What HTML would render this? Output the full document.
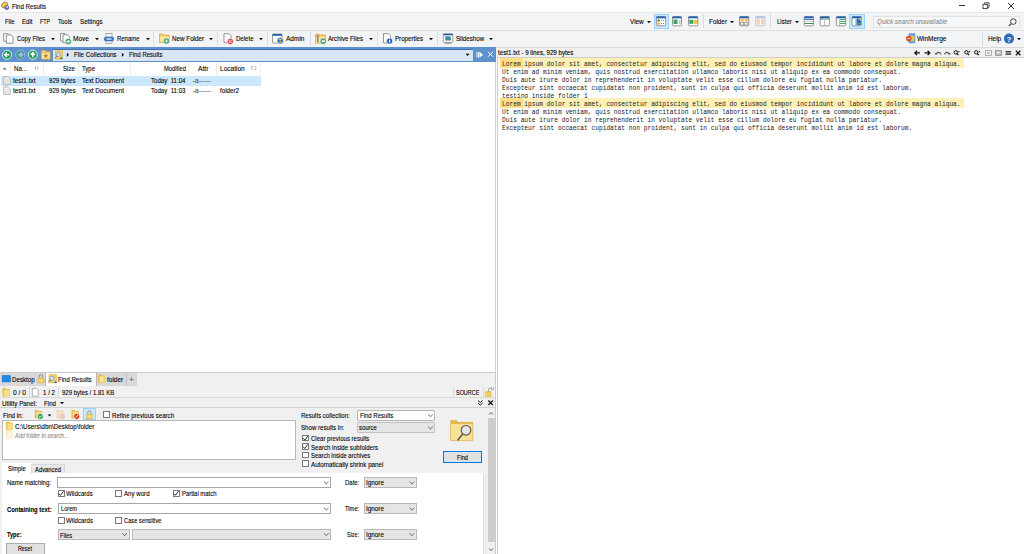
<!DOCTYPE html>
<html><head><meta charset="utf-8"><style>
html,body{margin:0;padding:0;width:1024px;height:554px;overflow:hidden;background:#fff;}
body>*{position:absolute;}
span{white-space:pre;transform-origin:0 0;-webkit-text-stroke:0.1px currentColor;}
svg{overflow:visible;}
</style></head><body>
<div style="left:0px;top:0px;width:1024px;height:12px;background:#fff"></div>
<div style="left:0px;top:12px;width:1024px;height:1px;background:#e6e6e6"></div>
<svg style="left:0px;top:0px" width="12" height="12" viewBox="0 0 12 12"><ellipse cx="4.6" cy="5" rx="3.4" ry="2.6" transform="rotate(-40 4.6 5)" fill="#f4cf3a" stroke="#6a5aa0" stroke-width="0.6"/><circle cx="6.8" cy="7.6" r="2.1" fill="#5a68b8" stroke="#3a3a8a" stroke-width="0.4"/><circle cx="7.1" cy="7.1" r="0.9" fill="#fff"/></svg>
<span style="left:12px;top:3.4px;font-family:'Liberation Sans', sans-serif;font-size:7.3px;line-height:7.3px;color:#000;transform:scaleX(0.838);">Find Results</span>
<div style="left:959px;top:5px;width:6px;height:1px;background:#333"></div>
<svg style="left:982px;top:2px" width="8" height="7" viewBox="0 0 8 7"><rect x="1" y="2.3" width="4.3" height="4.3" fill="none" stroke="#333" stroke-width="0.9"/><path d="M2.5 1.8 V0.8 H7 V5.3 H5.8" fill="none" stroke="#333" stroke-width="0.9"/></svg>
<svg style="left:1007px;top:2px" width="8" height="8" viewBox="0 0 8 8"><path d="M1 1 L7 7 M7 1 L1 7" stroke="#333" stroke-width="1"/></svg>
<div style="left:0px;top:13px;width:1024px;height:17px;background:#f3f4f6"></div>
<div style="left:0px;top:30px;width:1024px;height:1px;background:#e0e0e0"></div>
<span style="left:5px;top:18.0px;font-family:'Liberation Sans', sans-serif;font-size:7.3px;line-height:7.3px;color:#000;transform:scaleX(0.807);">File</span>
<span style="left:22px;top:18.0px;font-family:'Liberation Sans', sans-serif;font-size:7.3px;line-height:7.3px;color:#000;transform:scaleX(0.835);">Edit</span>
<span style="left:40px;top:18.0px;font-family:'Liberation Sans', sans-serif;font-size:7.3px;line-height:7.3px;color:#000;transform:scaleX(0.725);">FTP</span>
<span style="left:58px;top:18.0px;font-family:'Liberation Sans', sans-serif;font-size:7.3px;line-height:7.3px;color:#000;transform:scaleX(0.821);">Tools</span>
<span style="left:80px;top:18.0px;font-family:'Liberation Sans', sans-serif;font-size:7.3px;line-height:7.3px;color:#000;transform:scaleX(0.853);">Settings</span>
<span style="left:630.25px;top:17.9px;font-family:'Liberation Sans', sans-serif;font-size:7.3px;line-height:7.3px;color:#000;transform:scaleX(0.876);">View</span>
<svg style="left:647px;top:20.9px" width="4" height="2.2" viewBox="0 0 4 2.2"><path d="M0 0 H4 L2 2.2 Z" fill="#111"/></svg>
<div style="left:653.5px;top:13.5px;width:15.5px;height:15px;background:#cce8ff;border:1px solid #99d1ff;box-sizing:border-box"></div>
<div style="left:703px;top:14px;width:1px;height:14px;background:#dcdcdc"></div>
<span style="left:709px;top:17.9px;font-family:'Liberation Sans', sans-serif;font-size:7.3px;line-height:7.3px;color:#000;transform:scaleX(0.870);">Folder</span>
<svg style="left:729.5px;top:20.9px" width="4" height="2.2" viewBox="0 0 4 2.2"><path d="M0 0 H4 L2 2.2 Z" fill="#111"/></svg>
<div style="left:770px;top:14px;width:1px;height:14px;background:#dcdcdc"></div>
<span style="left:776.75px;top:17.9px;font-family:'Liberation Sans', sans-serif;font-size:7.3px;line-height:7.3px;color:#000;transform:scaleX(0.827);">Lister</span>
<svg style="left:794.5px;top:20.9px" width="4" height="2.2" viewBox="0 0 4 2.2"><path d="M0 0 H4 L2 2.2 Z" fill="#111"/></svg>
<div style="left:849px;top:13.5px;width:15.5px;height:15px;background:#cce8ff;border:1px solid #99d1ff;box-sizing:border-box"></div>
<div style="left:872.5px;top:15.5px;width:147px;height:12px;background:#f6f7f9;border:1px solid #e3e3e3;box-sizing:border-box"></div>
<span style="left:876.5px;top:17.8px;font-family:'Liberation Sans', sans-serif;font-size:7.3px;line-height:7.3px;color:#8a8a8a;font-style:italic;transform:scaleX(0.862);">Quick search unavailable</span>
<svg style="left:1008px;top:17.5px" width="9" height="9" viewBox="0 0 9 9"><circle cx="5.3" cy="3.6" r="2.8" fill="none" stroke="#444" stroke-width="1"/><path d="M3.3 5.6 L0.8 8.2" stroke="#444" stroke-width="1.2"/></svg>
<div style="left:0px;top:31px;width:1024px;height:16px;background:#f3f4f6"></div>
<span style="left:17px;top:35.4px;font-family:'Liberation Sans', sans-serif;font-size:7.3px;line-height:7.3px;color:#000;transform:scaleX(0.812);">Copy Files</span>
<span style="left:73px;top:35.4px;font-family:'Liberation Sans', sans-serif;font-size:7.3px;line-height:7.3px;color:#000;transform:scaleX(0.897);">Move</span>
<span style="left:117px;top:35.4px;font-family:'Liberation Sans', sans-serif;font-size:7.3px;line-height:7.3px;color:#000;transform:scaleX(0.815);">Rename</span>
<span style="left:171.8px;top:35.4px;font-family:'Liberation Sans', sans-serif;font-size:7.3px;line-height:7.3px;color:#000;transform:scaleX(0.860);">New Folder</span>
<span style="left:235.9px;top:35.4px;font-family:'Liberation Sans', sans-serif;font-size:7.3px;line-height:7.3px;color:#000;transform:scaleX(0.830);">Delete</span>
<span style="left:285.5px;top:35.4px;font-family:'Liberation Sans', sans-serif;font-size:7.3px;line-height:7.3px;color:#000;transform:scaleX(0.894);">Admin</span>
<span style="left:328px;top:35.4px;font-family:'Liberation Sans', sans-serif;font-size:7.3px;line-height:7.3px;color:#000;transform:scaleX(0.838);">Archive Files</span>
<span style="left:395px;top:35.4px;font-family:'Liberation Sans', sans-serif;font-size:7.3px;line-height:7.3px;color:#000;transform:scaleX(0.842);">Properties</span>
<span style="left:455.6px;top:35.4px;font-family:'Liberation Sans', sans-serif;font-size:7.3px;line-height:7.3px;color:#000;transform:scaleX(0.846);">Slideshow</span>
<span style="left:916.6px;top:35.4px;font-family:'Liberation Sans', sans-serif;font-size:7.3px;line-height:7.3px;color:#000;transform:scaleX(0.884);">WinMerge</span>
<span style="left:987.9px;top:35.4px;font-family:'Liberation Sans', sans-serif;font-size:7.3px;line-height:7.3px;color:#000;transform:scaleX(0.872);">Help</span>
<svg style="left:51px;top:37.9px" width="4" height="2.2" viewBox="0 0 4 2.2"><path d="M0 0 H4 L2 2.2 Z" fill="#111"/></svg>
<svg style="left:95px;top:37.9px" width="4" height="2.2" viewBox="0 0 4 2.2"><path d="M0 0 H4 L2 2.2 Z" fill="#111"/></svg>
<svg style="left:145.6px;top:37.9px" width="4" height="2.2" viewBox="0 0 4 2.2"><path d="M0 0 H4 L2 2.2 Z" fill="#111"/></svg>
<svg style="left:209.4px;top:37.9px" width="4" height="2.2" viewBox="0 0 4 2.2"><path d="M0 0 H4 L2 2.2 Z" fill="#111"/></svg>
<svg style="left:258.9px;top:37.9px" width="4" height="2.2" viewBox="0 0 4 2.2"><path d="M0 0 H4 L2 2.2 Z" fill="#111"/></svg>
<svg style="left:369px;top:37.9px" width="4" height="2.2" viewBox="0 0 4 2.2"><path d="M0 0 H4 L2 2.2 Z" fill="#111"/></svg>
<svg style="left:429.25px;top:37.9px" width="4" height="2.2" viewBox="0 0 4 2.2"><path d="M0 0 H4 L2 2.2 Z" fill="#111"/></svg>
<svg style="left:489.25px;top:37.9px" width="4" height="2.2" viewBox="0 0 4 2.2"><path d="M0 0 H4 L2 2.2 Z" fill="#111"/></svg>
<svg style="left:1016.5px;top:37.9px" width="4" height="2.2" viewBox="0 0 4 2.2"><path d="M0 0 H4 L2 2.2 Z" fill="#111"/></svg>
<div style="left:152.8px;top:31.5px;width:1px;height:14px;background:#dcdcdc"></div>
<div style="left:217.1px;top:31.5px;width:1px;height:14px;background:#dcdcdc"></div>
<div style="left:267.25px;top:31.5px;width:1px;height:14px;background:#dcdcdc"></div>
<div style="left:309.75px;top:31.5px;width:1px;height:14px;background:#dcdcdc"></div>
<div style="left:377.1px;top:31.5px;width:1px;height:14px;background:#dcdcdc"></div>
<div style="left:437.0px;top:31.5px;width:1px;height:14px;background:#dcdcdc"></div>
<div style="left:981.75px;top:31.5px;width:1px;height:14px;background:#dcdcdc"></div>
<div style="left:0px;top:47px;width:495.5px;height:14.5px;background:#5f91cf"></div>
<div style="left:52.5px;top:48.5px;width:420px;height:12.5px;background:#d9e5f3;border-top:1px solid #3f6fae;box-sizing:border-box"></div>
<span style="left:74.1px;top:51.1px;font-family:'Liberation Sans', sans-serif;font-size:7.3px;line-height:7.3px;color:#000;transform:scaleX(0.859);">File Collections</span>
<span style="left:128.5px;top:51.1px;font-family:'Liberation Sans', sans-serif;font-size:7.3px;line-height:7.3px;color:#000;transform:scaleX(0.826);">Find Results</span>
<div style="left:496px;top:47px;width:528px;height:10.5px;background:#f0f0f0"></div>
<div style="left:496px;top:46.5px;width:528px;height:1px;background:#d9d9d9"></div>
<div style="left:495px;top:61.5px;width:1px;height:492.5px;background:#cfcfcf"></div>
<span style="left:497.9px;top:50.12px;font-family:'Liberation Sans', sans-serif;font-size:6.8px;line-height:6.8px;color:#000;transform:scaleX(0.910);">test1.txt - 9 lines, 929 bytes</span>
<div style="left:497px;top:57px;width:527px;height:497px;background:#fff;border-left:1px solid #cdcdcd;border-top:1px solid #cdcdcd;box-sizing:border-box"></div>
<div style="left:500px;top:58.2px;width:463.5px;height:9.5px;background:#fff1b5;border-radius:1px"></div>
<div style="left:500px;top:58.2px;width:23px;height:9.5px;background:#ffe089;border-radius:1px"></div>
<span style="left:501.5px;top:60.81px;font-family:'Liberation Mono', monospace;font-size:6.7px;line-height:6.7px;color:#1a1a1a;-webkit-text-stroke:0;transform:scaleX(0.929);">Lorem ipsum dolor sit amet, consectetur adipiscing elit, sed do eiusmod tempor incididunt ut labore et dolore magna aliqua.</span>
<span style="left:501.5px;top:68.81px;font-family:'Liberation Mono', monospace;font-size:6.7px;line-height:6.7px;color:#1a1a1a;-webkit-text-stroke:0;transform:scaleX(0.929);">Ut enim ad minim veniam, quis nostrud exercitation ullamco laboris nisi ut aliquip ex ea commodo consequat.</span>
<span style="left:501.5px;top:76.81px;font-family:'Liberation Mono', monospace;font-size:6.7px;line-height:6.7px;color:#1a1a1a;-webkit-text-stroke:0;transform:scaleX(0.929);">Duis aute irure dolor in reprehenderit in voluptate velit esse cillum dolore eu fugiat nulla pariatur.</span>
<span style="left:501.5px;top:84.81px;font-family:'Liberation Mono', monospace;font-size:6.7px;line-height:6.7px;color:#1a1a1a;-webkit-text-stroke:0;transform:scaleX(0.929);">Excepteur sint occaecat cupidatat non proident, sunt in culpa qui officia deserunt mollit anim id est laborum.</span>
<span style="left:501.5px;top:92.81px;font-family:'Liberation Mono', monospace;font-size:6.7px;line-height:6.7px;color:#1a1a1a;-webkit-text-stroke:0;transform:scaleX(0.929);">testing inside folder 1</span>
<div style="left:500px;top:98.2px;width:463.5px;height:9.5px;background:#fff1b5;border-radius:1px"></div>
<div style="left:500px;top:98.2px;width:23px;height:9.5px;background:#ffe089;border-radius:1px"></div>
<span style="left:501.5px;top:100.81px;font-family:'Liberation Mono', monospace;font-size:6.7px;line-height:6.7px;color:#1a1a1a;-webkit-text-stroke:0;transform:scaleX(0.929);">Lorem ipsum dolor sit amet, consectetur adipiscing elit, sed do eiusmod tempor incididunt ut labore et dolore magna aliqua.</span>
<span style="left:501.5px;top:108.81px;font-family:'Liberation Mono', monospace;font-size:6.7px;line-height:6.7px;color:#1a1a1a;-webkit-text-stroke:0;transform:scaleX(0.929);">Ut enim ad minim veniam, quis nostrud exercitation ullamco laboris nisi ut aliquip ex ea commodo consequat.</span>
<span style="left:501.5px;top:116.81px;font-family:'Liberation Mono', monospace;font-size:6.7px;line-height:6.7px;color:#1a1a1a;-webkit-text-stroke:0;transform:scaleX(0.929);">Duis aute irure dolor in reprehenderit in voluptate velit esse cillum dolore eu fugiat nulla pariatur.</span>
<span style="left:501.5px;top:124.81px;font-family:'Liberation Mono', monospace;font-size:6.7px;line-height:6.7px;color:#1a1a1a;-webkit-text-stroke:0;transform:scaleX(0.929);">Excepteur sint occaecat cupidatat non proident, sunt in culpa qui officia deserunt mollit anim id est laborum.</span>
<div style="left:10.0px;top:62px;width:1px;height:13px;background:#ececec"></div>
<div style="left:43.0px;top:62px;width:1px;height:13px;background:#ececec"></div>
<div style="left:78.0px;top:62px;width:1px;height:13px;background:#ececec"></div>
<div style="left:130.0px;top:62px;width:1px;height:13px;background:#ececec"></div>
<div style="left:188.3px;top:62px;width:1px;height:13px;background:#ececec"></div>
<div style="left:215.8px;top:62px;width:1px;height:13px;background:#ececec"></div>
<div style="left:259.7px;top:62px;width:1px;height:13px;background:#ececec"></div>
<span style="left:14px;top:65.39px;font-family:'Liberation Sans', sans-serif;font-size:7.3px;line-height:7.3px;color:#000;transform:scaleX(0.843);">Na...</span>
<span style="left:63px;top:65.39px;font-family:'Liberation Sans', sans-serif;font-size:7.3px;line-height:7.3px;color:#000;transform:scaleX(0.845);">Size</span>
<span style="left:82px;top:65.39px;font-family:'Liberation Sans', sans-serif;font-size:7.3px;line-height:7.3px;color:#000;transform:scaleX(0.821);">Type</span>
<span style="left:163.7px;top:65.39px;font-family:'Liberation Sans', sans-serif;font-size:7.3px;line-height:7.3px;color:#000;transform:scaleX(0.797);">Modified</span>
<span style="left:197.9px;top:65.39px;font-family:'Liberation Sans', sans-serif;font-size:7.3px;line-height:7.3px;color:#000;transform:scaleX(0.924);">Attr</span>
<span style="left:220px;top:65.39px;font-family:'Liberation Sans', sans-serif;font-size:7.3px;line-height:7.3px;color:#000;transform:scaleX(0.895);">Location</span>
<div style="left:0.5px;top:75.5px;width:260.5px;height:10px;background:#cce8ff"></div>
<span style="left:12.5px;top:77.39px;font-family:'Liberation Sans', sans-serif;font-size:7.3px;line-height:7.3px;color:#000;transform:scaleX(0.880);">test1.txt</span>
<span style="left:48.5px;top:77.39px;font-family:'Liberation Sans', sans-serif;font-size:7.3px;line-height:7.3px;color:#000;transform:scaleX(0.837);">929 bytes</span>
<span style="left:81.5px;top:77.39px;font-family:'Liberation Sans', sans-serif;font-size:7.3px;line-height:7.3px;color:#000;transform:scaleX(0.863);">Text Document</span>
<span style="left:151.2px;top:77.39px;font-family:'Liberation Sans', sans-serif;font-size:7.3px;line-height:7.3px;color:#000;transform:scaleX(0.836);">Today  11:04</span>
<span style="left:192.4px;top:77.39px;font-family:'Liberation Sans', sans-serif;font-size:7.3px;line-height:7.3px;color:#555;">-a-----</span>
<span style="left:12.5px;top:87.39px;font-family:'Liberation Sans', sans-serif;font-size:7.3px;line-height:7.3px;color:#000;transform:scaleX(0.880);">test1.txt</span>
<span style="left:48.5px;top:87.39px;font-family:'Liberation Sans', sans-serif;font-size:7.3px;line-height:7.3px;color:#000;transform:scaleX(0.837);">929 bytes</span>
<span style="left:81.5px;top:87.39px;font-family:'Liberation Sans', sans-serif;font-size:7.3px;line-height:7.3px;color:#000;transform:scaleX(0.863);">Text Document</span>
<span style="left:151.2px;top:87.39px;font-family:'Liberation Sans', sans-serif;font-size:7.3px;line-height:7.3px;color:#000;transform:scaleX(0.836);">Today  11:03</span>
<span style="left:192.4px;top:87.39px;font-family:'Liberation Sans', sans-serif;font-size:7.3px;line-height:7.3px;color:#555;">-a-----</span>
<span style="left:220px;top:87.39px;font-family:'Liberation Sans', sans-serif;font-size:7.3px;line-height:7.3px;color:#000;transform:scaleX(0.852);">folder2</span>
<div style="left:0px;top:372px;width:496px;height:14px;background:#f0f0f0;border-top:1px solid #cbcbcb;box-sizing:border-box"></div>
<div style="left:0px;top:373px;width:45.5px;height:13px;background:#d9d9d9"></div>
<div style="left:45.5px;top:373px;width:50.5px;height:13px;background:#fff"></div>
<div style="left:96px;top:373px;width:1px;height:13px;background:#b8b8b8"></div>
<div style="left:44.6px;top:373px;width:1px;height:13px;background:#b8b8b8"></div>
<div style="left:126px;top:373px;width:1px;height:13px;background:#c4c4c4"></div>
<div style="left:97px;top:373px;width:29px;height:13px;background:#d9d9d9"></div>
<div style="left:127px;top:373px;width:9.5px;height:13px;background:#d9d9d9"></div>
<span style="left:11.7px;top:375.8px;font-family:'Liberation Sans', sans-serif;font-size:7.3px;line-height:7.3px;color:#000;transform:scaleX(0.848);">Desktop</span>
<span style="left:58px;top:375.8px;font-family:'Liberation Sans', sans-serif;font-size:7.3px;line-height:7.3px;color:#000;transform:scaleX(0.828);">Find Results</span>
<span style="left:106.7px;top:375.8px;font-family:'Liberation Sans', sans-serif;font-size:7.3px;line-height:7.3px;color:#000;transform:scaleX(0.892);">folder</span>
<span style="left:128.5px;top:376.4px;font-family:'Liberation Sans', sans-serif;font-size:7.3px;line-height:7.3px;color:#666;transform:scaleX(1.172);">+</span>
<div style="left:0px;top:386px;width:496px;height:11.5px;background:#f0f0f0;border-bottom:1px solid #d9d9d9;box-sizing:border-box"></div>
<span style="left:13px;top:389.4px;font-family:'Liberation Sans', sans-serif;font-size:7.3px;line-height:7.3px;color:#000;transform:scaleX(0.915);">0 / 0</span>
<span style="left:43px;top:389.4px;font-family:'Liberation Sans', sans-serif;font-size:7.3px;line-height:7.3px;color:#000;transform:scaleX(0.845);">1 / 2</span>
<span style="left:62px;top:389.4px;font-family:'Liberation Sans', sans-serif;font-size:7.3px;line-height:7.3px;color:#000;transform:scaleX(0.820);">929 bytes / 1.81 KB</span>
<span style="left:456.3px;top:389.4px;font-family:'Liberation Sans', sans-serif;font-size:7.3px;line-height:7.3px;color:#000;transform:scaleX(0.746);">SOURCE</span>
<div style="left:28.5px;top:386.5px;width:1px;height:10px;background:#dcdcdc"></div>
<div style="left:58px;top:386.5px;width:1px;height:10px;background:#dcdcdc"></div>
<div style="left:452.8px;top:386.5px;width:1px;height:10px;background:#dcdcdc"></div>
<div style="left:483.4px;top:386.5px;width:1px;height:10px;background:#dcdcdc"></div>
<div style="left:0px;top:397.5px;width:496px;height:10.5px;background:#f0f0f0;border-bottom:1px solid #d0d0d0;box-sizing:border-box"></div>
<span style="left:2px;top:399.9px;font-family:'Liberation Sans', sans-serif;font-size:7.3px;line-height:7.3px;color:#000;transform:scaleX(0.863);">Utility Panel:</span>
<span style="left:44px;top:399.9px;font-family:'Liberation Sans', sans-serif;font-size:7.3px;line-height:7.3px;color:#000;transform:scaleX(0.845);">Find</span>
<svg style="left:60px;top:401.9px" width="4" height="2.2" viewBox="0 0 4 2.2"><path d="M0 0 H4 L2 2.2 Z" fill="#111"/></svg>
<div style="left:0px;top:408px;width:487px;height:146px;background:#f0f0f0"></div>
<span style="left:2.8px;top:412.0px;font-family:'Liberation Sans', sans-serif;font-size:7.3px;line-height:7.3px;color:#000;transform:scaleX(0.844);">Find in:</span>
<div style="left:83px;top:408.2px;width:13px;height:12.2px;background:#cce8ff;border:1px solid #99d1ff;box-sizing:border-box"></div>
<div style="left:103.2px;top:411.1px;width:7.2px;height:7.3px;background:#fff;border:1px solid #7a7a7a;box-sizing:border-box"></div>
<span style="left:112px;top:412.0px;font-family:'Liberation Sans', sans-serif;font-size:7.3px;line-height:7.3px;color:#000;transform:scaleX(0.831);">Refine previous search</span>
<div style="left:1.5px;top:420.2px;width:294px;height:40.3px;background:#fff;border:1px solid #b9b9b9;box-sizing:border-box"></div>
<span style="left:14.5px;top:423.2px;font-family:'Liberation Sans', sans-serif;font-size:7.3px;line-height:7.3px;color:#000;transform:scaleX(0.867);">C:\Users\dbn\Desktop\folder</span>
<span style="left:14.5px;top:431.7px;font-family:'Liberation Sans', sans-serif;font-size:7.3px;line-height:7.3px;color:#8a8a8a;font-style:italic;transform:scaleX(0.749);">Add folder to search...</span>
<span style="left:301px;top:412.0px;font-family:'Liberation Sans', sans-serif;font-size:7.3px;line-height:7.3px;color:#000;transform:scaleX(0.828);">Results collection:</span>
<span style="left:301px;top:423.7px;font-family:'Liberation Sans', sans-serif;font-size:7.3px;line-height:7.3px;color:#000;transform:scaleX(0.841);">Show results in:</span>
<div style="left:356.7px;top:410.1px;width:78.4px;height:10.8px;background:#fff;border:1px solid #b5b5b5;border-radius:1px;box-sizing:border-box"></div>
<span style="left:359.6px;top:412.0px;font-family:'Liberation Sans', sans-serif;font-size:7.3px;line-height:7.3px;color:#000;transform:scaleX(0.823);">Find Results</span>
<div style="left:357px;top:422.3px;width:78px;height:10.7px;background:#e5e5e5;border:1px solid #c2c2c2;border-radius:1px;box-sizing:border-box"></div>
<span style="left:359.2px;top:423.7px;font-family:'Liberation Sans', sans-serif;font-size:7.3px;line-height:7.3px;color:#000;transform:scaleX(0.813);">source</span>
<div style="left:301.9px;top:434.9px;width:7px;height:6.6px;background:#fff;border:1px solid #7a7a7a;box-sizing:border-box"></div>
<span style="left:310.5px;top:435.3px;font-family:'Liberation Sans', sans-serif;font-size:7.3px;line-height:7.3px;color:#000;transform:scaleX(0.827);">Clear previous results</span>
<div style="left:301.9px;top:443.34999999999997px;width:7px;height:6.6px;background:#fff;border:1px solid #7a7a7a;box-sizing:border-box"></div>
<span style="left:310.5px;top:443.75px;font-family:'Liberation Sans', sans-serif;font-size:7.3px;line-height:7.3px;color:#000;transform:scaleX(0.840);">Search inside subfolders</span>
<div style="left:301.9px;top:451.79999999999995px;width:7px;height:6.6px;background:#fff;border:1px solid #7a7a7a;box-sizing:border-box"></div>
<span style="left:310.5px;top:452.19px;font-family:'Liberation Sans', sans-serif;font-size:7.3px;line-height:7.3px;color:#000;transform:scaleX(0.808);">Search inside archives</span>
<div style="left:301.9px;top:460.25px;width:7px;height:6.6px;background:#fff;border:1px solid #7a7a7a;box-sizing:border-box"></div>
<span style="left:310.5px;top:460.65px;font-family:'Liberation Sans', sans-serif;font-size:7.3px;line-height:7.3px;color:#000;transform:scaleX(0.854);">Automatically shrink panel</span>
<div style="left:443.1px;top:451px;width:39px;height:11.8px;background:#e1e1e1;border:1px solid #0078d7;box-shadow:inset 0 0 0 1px #cfe6fa;box-sizing:border-box"></div>
<span style="left:456.8px;top:453.9px;font-family:'Liberation Sans', sans-serif;font-size:7.3px;line-height:7.3px;color:#000;transform:scaleX(0.774);">Find</span>
<div style="left:487px;top:408px;width:8.2px;height:146px;background:#f0f0f0"></div>
<div style="left:488px;top:418px;width:7px;height:124px;background:#cdcdcd"></div>
<div style="left:495px;top:372px;width:1px;height:182px;background:#cacaca"></div>
<div style="left:483px;top:473.3px;width:1px;height:81px;background:#dedede"></div>
<div style="left:1.5px;top:463px;width:29.5px;height:11px;background:#fff"></div>
<div style="left:31px;top:464px;width:34.4px;height:9.5px;background:#e8e8e8;border:1px solid #d9d9d9;border-bottom:none;box-sizing:border-box"></div>
<span style="left:8px;top:464.7px;font-family:'Liberation Sans', sans-serif;font-size:7.3px;line-height:7.3px;color:#000;transform:scaleX(0.798);">Simple</span>
<span style="left:35px;top:465.7px;font-family:'Liberation Sans', sans-serif;font-size:7.3px;line-height:7.3px;color:#000;transform:scaleX(0.801);">Advanced</span>
<div style="left:1.5px;top:473.3px;width:481.6px;height:81px;background:#fff"></div>
<span style="left:6.5px;top:479.0px;font-family:'Liberation Sans', sans-serif;font-size:7.3px;line-height:7.3px;color:#000;transform:scaleX(0.828);">Name matching:</span>
<div style="left:57.3px;top:477.3px;width:273.6px;height:10.8px;background:#fff;border:1px solid #a8a8a8;box-sizing:border-box"></div>
<div style="left:57.5px;top:490.2px;width:7px;height:7px;background:#fff;border:1px solid #7a7a7a;box-sizing:border-box"></div>
<span style="left:66.3px;top:490.4px;font-family:'Liberation Sans', sans-serif;font-size:7.3px;line-height:7.3px;color:#000;transform:scaleX(0.834);">Wildcards</span>
<div style="left:115px;top:490.1px;width:7.2px;height:7.2px;background:#fff;border:1px solid #7a7a7a;box-sizing:border-box"></div>
<span style="left:124.1px;top:490.4px;font-family:'Liberation Sans', sans-serif;font-size:7.3px;line-height:7.3px;color:#000;transform:scaleX(0.841);">Any word</span>
<div style="left:172.5px;top:490.1px;width:7.2px;height:7.2px;background:#fff;border:1px solid #7a7a7a;box-sizing:border-box"></div>
<span style="left:181.6px;top:490.4px;font-family:'Liberation Sans', sans-serif;font-size:7.3px;line-height:7.3px;color:#000;transform:scaleX(0.808);">Partial match</span>
<span style="left:6.5px;top:505.6px;font-family:'Liberation Sans', sans-serif;font-size:7.3px;line-height:7.3px;color:#000;font-weight:bold;transform:scaleX(0.805);">Containing text:</span>
<div style="left:57.5px;top:503.4px;width:273.4px;height:11px;background:#fff;border:1px solid #a8a8a8;box-sizing:border-box"></div>
<span style="left:61px;top:504.9px;font-family:'Liberation Sans', sans-serif;font-size:7.3px;line-height:7.3px;color:#000;transform:scaleX(0.773);">Lorem</span>
<div style="left:57.5px;top:516.6px;width:7px;height:7px;background:#fff;border:1px solid #7a7a7a;box-sizing:border-box"></div>
<span style="left:66px;top:517.0px;font-family:'Liberation Sans', sans-serif;font-size:7.3px;line-height:7.3px;color:#000;transform:scaleX(0.843);">Wildcards</span>
<div style="left:115px;top:516.6px;width:7px;height:7px;background:#fff;border:1px solid #7a7a7a;box-sizing:border-box"></div>
<span style="left:123.8px;top:517.0px;font-family:'Liberation Sans', sans-serif;font-size:7.3px;line-height:7.3px;color:#000;transform:scaleX(0.790);">Case sensitive</span>
<span style="left:6.5px;top:531.39px;font-family:'Liberation Sans', sans-serif;font-size:7.3px;line-height:7.3px;color:#000;font-weight:bold;transform:scaleX(0.766);">Type:</span>
<div style="left:57.5px;top:529px;width:72.1px;height:10.8px;background:#e5e5e5;border:1px solid #b8b8b8;box-sizing:border-box"></div>
<span style="left:60px;top:531.69px;font-family:'Liberation Sans', sans-serif;font-size:7.3px;line-height:7.3px;color:#000;transform:scaleX(0.779);">Files</span>
<div style="left:131.9px;top:529px;width:199px;height:10.8px;background:#e5e5e5;border:1px solid #b8b8b8;box-sizing:border-box"></div>
<div style="left:6px;top:542.9px;width:39px;height:12px;background:#e1e1e1;border:1px solid #adadad;box-sizing:border-box"></div>
<span style="left:18.2px;top:545.39px;font-family:'Liberation Sans', sans-serif;font-size:7.3px;line-height:7.3px;color:#000;transform:scaleX(0.734);">Reset</span>
<span style="left:344.7px;top:479.2px;font-family:'Liberation Sans', sans-serif;font-size:7.3px;line-height:7.3px;color:#000;transform:scaleX(0.819);">Date:</span>
<div style="left:363.9px;top:477.2px;width:52.8px;height:10.8px;background:#e5e5e5;border:1px solid #b8b8b8;box-sizing:border-box"></div>
<span style="left:365.8px;top:479.1px;font-family:'Liberation Sans', sans-serif;font-size:7.3px;line-height:7.3px;color:#000;transform:scaleX(0.869);">Ignore</span>
<span style="left:344.7px;top:505.3px;font-family:'Liberation Sans', sans-serif;font-size:7.3px;line-height:7.3px;color:#000;transform:scaleX(0.795);">Time:</span>
<div style="left:363.9px;top:503.3px;width:52.8px;height:10.8px;background:#e5e5e5;border:1px solid #b8b8b8;box-sizing:border-box"></div>
<span style="left:365.8px;top:505.2px;font-family:'Liberation Sans', sans-serif;font-size:7.3px;line-height:7.3px;color:#000;transform:scaleX(0.869);">Ignore</span>
<span style="left:346.9px;top:531.0px;font-family:'Liberation Sans', sans-serif;font-size:7.3px;line-height:7.3px;color:#000;transform:scaleX(0.745);">Size:</span>
<div style="left:363.9px;top:529px;width:52.8px;height:10.8px;background:#e5e5e5;border:1px solid #b8b8b8;box-sizing:border-box"></div>
<span style="left:365.8px;top:530.89px;font-family:'Liberation Sans', sans-serif;font-size:7.3px;line-height:7.3px;color:#000;transform:scaleX(0.869);">Ignore</span>
<svg style="left:0px;top:0px" width="1024" height="554" viewBox="0 0 1024 554"><path d="M3.7 33.7 H8.2 L10.2 35.7 V41.2 H3.7 Z" fill="#fff" stroke="#7a7a7a" stroke-width="0.8" stroke-linejoin="round"/><path d="M6.3 35.0 H11.1 L13.1 37.0 V43.2 H6.3 Z" fill="#fff" stroke="#7a7a7a" stroke-width="0.8" stroke-linejoin="round"/><path d="M60.5 33.5 H65.0 L67.0 35.5 V41.0 H60.5 Z" fill="#fff" stroke="#7a7a7a" stroke-width="0.8" stroke-linejoin="round"/><path d="M63.0 34.8 H67.5 L69.5 36.8 V42.8 H63.0 Z" fill="#fff" stroke="#7a7a7a" stroke-width="0.8" stroke-linejoin="round"/><circle cx="68.3" cy="41.5" r="3.1" fill="#2e9b5a" stroke="#fff" stroke-width="0.6"/><path d="M66.4 40.8 L68.2 40.8 L68.2 39.6 L70.3 41.5 L68.2 43.4 L68.2 42.2 L66.4 42.2 Z" fill="#fff"/><rect x="106" y="33.5" width="6" height="4" fill="#fff" stroke="#8a8a8a" stroke-width="0.7"/><rect x="106" y="39.5" width="6" height="4" fill="#fff" stroke="#8a8a8a" stroke-width="0.7"/><rect x="104.2" y="37" width="9.6" height="4" rx="2" fill="#3a78c8" stroke="#2a5fa8" stroke-width="0.6"/><rect x="106.5" y="38.3" width="5" height="1.4" fill="#dbe8f7"/><path d="M159.5 34.0 H163 L164 35.0 H169.0 V42.5 H159.5 Z" fill="#f8d775" stroke="#d9a93a" stroke-width="0.8"/><rect x="159.5" y="36.0" width="9.5" height="6.5" fill="#fbe49a" stroke="#d9a93a" stroke-width="0.5"/><circle cx="166.5" cy="41" r="3.1" fill="#2e9b5a" stroke="#fff" stroke-width="0.6"/><path d="M166.5 39.3 V42.7 M164.8 41 H168.2" stroke="#fff" stroke-width="1.1"/><path d="M224.0 33.7 H229.0 L231.0 35.7 V42.7 H224.0 Z" fill="#fff" stroke="#7a7a7a" stroke-width="0.8" stroke-linejoin="round"/><circle cx="230.3" cy="41.5" r="3" fill="#d2402a" stroke="#fff" stroke-width="0.6"/><path d="M229 40.2 L231.6 42.8 M231.6 40.2 L229 42.8" stroke="#fff" stroke-width="1"/><rect x="272.5" y="34.0" width="9.5" height="9" rx="1" fill="#fff" stroke="#8c8c8c" stroke-width="0.9"/><rect x="272.5" y="34.0" width="9.5" height="1.8" fill="#1f5fb0"/><circle cx="280.2" cy="40.8" r="3.2" fill="#2a6cc2" stroke="#fff" stroke-width="0.6"/><path d="M278.3 38.9 H282.1 L278.3 42.7 H282.1 Z" fill="#f2c12e"/><path d="M315.5 34.0 H319 L320 35.0 H325.5 V43.0 H315.5 Z" fill="#f8d775" stroke="#d9a93a" stroke-width="0.8"/><rect x="315.5" y="36.0" width="10" height="7" fill="#fbe49a" stroke="#d9a93a" stroke-width="0.5"/><circle cx="317.8" cy="36.3" r="0.9" fill="none" stroke="#555" stroke-width="0.6"/><rect x="317.2" y="37.2" width="1.2" height="5" fill="#6a6a8a"/><circle cx="323.2" cy="41.2" r="3.1" fill="#2e9b5a" stroke="#fff" stroke-width="0.6"/><path d="M325.1 40.5 L323.3 40.5 L323.3 39.3 L321.2 41.2 L323.3 43.1 L323.3 41.9 L325.1 41.9 Z" fill="#fff"/><path d="M383.5 33.7 H388.5 L390.5 35.7 V42.900000000000006 H383.5 Z" fill="#fff" stroke="#7a7a7a" stroke-width="0.8" stroke-linejoin="round"/><circle cx="389.6" cy="41" r="3.1" fill="#1f62b8" stroke="#fff" stroke-width="0.6"/><path d="M389.6 39.9 V42.6" stroke="#fff" stroke-width="1.2"/><circle cx="389.6" cy="38.8" r="0.6" fill="#fff"/><rect x="443.3" y="33.8" width="9.5" height="8.5" rx="0.8" fill="#fff" stroke="#8c8c8c" stroke-width="0.8"/><rect x="443.3" y="33.8" width="9.5" height="1.5" fill="#1f5fb0"/><rect x="445.3" y="36.3" width="5.5" height="4" fill="#3d7fc7"/><path d="M445.3 40.3 L447 38.5 L448.5 39.5 L450.8 37.5 V40.3 Z" fill="#3aa36a"/><circle cx="450" cy="36.8" r="0.8" fill="#f2d04a"/><rect x="444.5" y="42.5" width="7" height="1.3" fill="#9a9a9a"/><rect x="909" y="33.6" width="6" height="9.4" rx="0.6" fill="#6fa8e0" stroke="#4d86c4" stroke-width="0.5"/><rect x="909.8" y="36" width="4.4" height="5" fill="#f5c33a"/><circle cx="908.8" cy="38.6" r="2.8" fill="#e0502a"/><path d="M907.5 38.6 H910.4" stroke="#fff" stroke-width="0.8"/><circle cx="1009" cy="38.6" r="5" fill="#2a6ab8"/><text x="1009" y="41.6" font-family="Liberation Sans" font-weight="bold" font-size="8" fill="#fff" text-anchor="middle">?</text></svg>
<svg style="left:0px;top:0px" width="1024" height="554" viewBox="0 0 1024 554"><rect x="656.4" y="16.5" width="9.3" height="9.3" rx="1" fill="#fff" stroke="#8c8c8c" stroke-width="0.9"/><rect x="656.4" y="16.5" width="9.3" height="1.8" fill="#1f5fb0"/><circle cx="658.6" cy="20.5" r="1.2" fill="#2e9b5a"/><rect x="657.5" y="22.7" width="2.2" height="2" fill="#e8a21f"/><rect x="661" y="19.8" width="1" height="1" fill="#777"/><rect x="663" y="19.8" width="1" height="1" fill="#777"/><rect x="661" y="23" width="1" height="1" fill="#777"/><rect x="663" y="23" width="1" height="1" fill="#777"/><rect x="672.5" y="16.5" width="9" height="9.3" rx="1" fill="#fff" stroke="#8c8c8c" stroke-width="0.9"/><rect x="672.5" y="16.5" width="9" height="1.8" fill="#1f5fb0"/><rect x="673.5" y="19.5" width="4" height="4.5" fill="#3aa36a"/><rect x="679.5" y="20" width="0.8" height="4" fill="#888"/><rect x="688.5" y="16.5" width="9.3" height="9.3" rx="1" fill="#fff" stroke="#8c8c8c" stroke-width="0.9"/><rect x="688.5" y="16.5" width="9.3" height="1.8" fill="#1f5fb0"/><rect x="689.3" y="19.8" width="3.8" height="4" fill="#3aa36a"/><rect x="693.3" y="19.8" width="3.8" height="4" fill="#f2c34a"/><rect x="739.5" y="16.5" width="9.3" height="9.3" rx="1" fill="#fff" stroke="#8c8c8c" stroke-width="0.9"/><rect x="739.5" y="16.5" width="9.3" height="1.8" fill="#1f5fb0"/><rect x="740.5" y="19" width="3.2" height="2.4" fill="#f0b93a"/><rect x="744.7" y="19" width="3.2" height="2.4" fill="#f0b93a"/><rect x="740.5" y="22.5" width="3.2" height="2.5" fill="#fff" stroke="#777" stroke-width="0.6"/><rect x="744.7" y="22.5" width="3.2" height="2.5" fill="#fff" stroke="#777" stroke-width="0.6"/><g opacity="0.45"><rect x="755.7" y="16.5" width="9.3" height="9.3" rx="1" fill="#fff" stroke="#8c8c8c" stroke-width="0.9"/><rect x="755.7" y="16.5" width="9.3" height="1.8" fill="#5b8fd0"/><rect x="756.8" y="19" width="3" height="5.5" fill="#f0a860"/><rect x="761" y="19" width="3" height="5.5" fill="#f0a860"/></g><rect x="804.2" y="16.5" width="9.3" height="9.3" rx="1" fill="#fff" stroke="#8c8c8c" stroke-width="0.9"/><rect x="804.2" y="16.5" width="9.3" height="1.8" fill="#1f5fb0"/><rect x="804.5" y="19" width="8.7" height="0.9" fill="#1f5fb0"/><rect x="804.5" y="21.3" width="8.7" height="0.6" fill="#e0a0a0"/><rect x="804.5" y="23" width="8.7" height="1" fill="#2e9b5a"/><rect x="820.1" y="16.5" width="9.3" height="9.3" rx="1" fill="#fff" stroke="#8c8c8c" stroke-width="0.9"/><rect x="820.1" y="16.5" width="9.3" height="1.8" fill="#1f5fb0"/><rect x="820.4" y="18.6" width="3.3" height="0.9" fill="#1f5fb0"/><rect x="825" y="18.6" width="4" height="0.9" fill="#2e9b5a"/><rect x="824.3" y="18.4" width="0.6" height="7" fill="#999"/><rect x="836.4" y="16.5" width="9.3" height="9.3" rx="1" fill="#fff" stroke="#8c8c8c" stroke-width="0.9"/><rect x="836.4" y="16.5" width="9.3" height="1.8" fill="#1f5fb0"/><rect x="839" y="18.5" width="0.6" height="7" fill="#999"/><rect x="840" y="19" width="5.5" height="0.9" fill="#2e9b5a"/><rect x="840" y="21" width="5.5" height="0.9" fill="#2e9b5a"/><rect x="840" y="23" width="5.5" height="0.9" fill="#2e9b5a"/><rect x="852.0" y="16.5" width="9.3" height="9.3" rx="1" fill="#fff" stroke="#8c8c8c" stroke-width="0.9"/><rect x="852.0" y="16.5" width="9.3" height="1.8" fill="#1f5fb0"/><rect x="855.5" y="18.5" width="0.6" height="7" fill="#999"/><path d="M856.5 18.5 H860 L861 21 V25 H856.5 Z" fill="#2a6cc2"/><path d="M858.5 18.5 H861 V21 Z" fill="#f2d04a"/><rect x="856.6" y="23" width="4.5" height="1.2" fill="#3aa36a"/></svg>
<svg style="left:0px;top:0px" width="1024" height="554" viewBox="0 0 1024 554"><g opacity="1"><circle cx="7" cy="54.8" r="4.6" fill="#23a05c" stroke="#e9f5ee" stroke-width="0.9"/><path d="M9.3 54.8 H5 M7 52.6 L4.8 54.8 L7 57" stroke="#fff" stroke-width="1.6" fill="none"/></g><g opacity="0.45"><circle cx="20.3" cy="54.8" r="4.6" fill="#23a05c" stroke="#e9f5ee" stroke-width="0.9"/><path d="M18 54.8 H22.3 M20.3 52.6 L22.5 54.8 L20.3 57" stroke="#fff" stroke-width="1.6" fill="none"/></g><g opacity="1"><circle cx="32.8" cy="54.8" r="4.6" fill="#23a05c" stroke="#e9f5ee" stroke-width="0.9"/><path d="M32.8 57.2 V52.8 M30.6 55 L32.8 52.7 L35 55" stroke="#fff" stroke-width="1.6" fill="none"/></g><path d="M41.5 50.5 H45 L46 51.5 H50.0 V59.0 H41.5 Z" fill="#f8d775" stroke="#d9a93a" stroke-width="0.8"/><rect x="41.5" y="52.5" width="8.5" height="6.5" fill="#fbe49a" stroke="#d9a93a" stroke-width="0.5"/><path d="M45.8 53.3 L46.6 55 L48.3 55.1 L47 56.2 L47.4 57.9 L45.8 57 L44.2 57.9 L44.6 56.2 L43.3 55.1 L45 55 Z" fill="#b08a3a"/><rect x="55.5" y="50.8" width="7" height="8.5" rx="0.5" fill="#f5d36a" stroke="#d9a93a" stroke-width="0.6"/><circle cx="58.3" cy="54.6" r="2.1" fill="#bfe0f0" stroke="#6a8aa0" stroke-width="0.6"/><path d="M56.8 56.2 L55.2 58.2" stroke="#555" stroke-width="0.8"/><path d="M61.2 57 L63 59 H59.6 Z" fill="#2a6cc2"/><path d="M66.9 52.8 L69.10000000000001 54.8 L66.9 56.8 Z" fill="#111"/><path d="M121.9 52.8 L124.10000000000001 54.8 L121.9 56.8 Z" fill="#111"/><path d="M465.6 53.8 H469.6 L467.6 55.9 Z" fill="#111"/><path d="M477 52 V57.5 M478.5 52 V57.5" stroke="#fff" stroke-width="0.9"/><path d="M479.5 51.8 L483 54.8 L479.5 57.8 Z" fill="#fff"/><path d="M488 51.8 L493 56.8 M493 51.8 L488 56.8" stroke="#fff" stroke-width="1"/><path d="M914.8 52.9 H920 M917 50.7 L914.8 52.9 L917 55.1" stroke="#111" stroke-width="1.3" fill="none"/><path d="M924.6 52.9 H929.8 M927.6 50.7 L929.8 52.9 L927.6 55.1" stroke="#111" stroke-width="1.3" fill="none"/><path d="M936.6 53.6 A2.2 2.2 0 0 1 940.6 53.8 V54.4" stroke="#555" stroke-width="1.1" fill="none"/><rect x="935" y="53" width="2.2" height="1.5" fill="#555"/><path d="M944.8 54.4 V53.8 A2.2 2.2 0 0 1 948.8 53.6" stroke="#555" stroke-width="1.1" fill="none"/><rect x="948.2" y="53" width="2.2" height="1.5" fill="#555"/><circle cx="955.8" cy="52.3" r="1.7" fill="none" stroke="#111" stroke-width="1"/><path d="M956.8 53.3 L958.5 55.2" stroke="#111" stroke-width="1.2"/><rect x="958.3" y="51" width="1.2" height="1.2" fill="#111"/><circle cx="966.4" cy="52.3" r="1.7" fill="none" stroke="#111" stroke-width="1"/><path d="M967.4 53.3 L969.1 55.2" stroke="#111" stroke-width="1.2"/><rect x="968.9" y="51" width="1.2" height="1.2" fill="#111"/><circle cx="976.1999999999999" cy="52.3" r="1.7" fill="none" stroke="#111" stroke-width="1"/><path d="M977.1999999999999 53.3 L978.9 55.2" stroke="#111" stroke-width="1.2"/><rect x="978.6999999999999" y="51" width="1.2" height="1.2" fill="#111"/><rect x="985.5" y="50.6" width="6" height="4.8" fill="#eee" stroke="#999" stroke-width="0.7"/><rect x="987.3" y="52" width="2.4" height="2" fill="#bbb"/><rect x="995.5" y="50.6" width="6" height="4.8" fill="#bbb" stroke="#888" stroke-width="0.7"/><rect x="996.6" y="51.6" width="3.8" height="1.8" fill="#e5e5e5"/><rect x="1005.6" y="51.2" width="5.6" height="1.2" fill="#111"/><rect x="1005.6" y="53.5" width="5.6" height="1.2" fill="#111"/><path d="M1015.8 50.6 L1020.4 55.2 M1020.4 50.6 L1015.8 55.2" stroke="#111" stroke-width="1.3"/></svg>
<svg style="left:0px;top:0px" width="1024" height="554" viewBox="0 0 1024 554"><path d="M2.6 69.6 L4.7 67.6 L6.8 69.6 Z" fill="#6a6a6a"/><path d="M35.5 70 V66.5 M34.5 67.5 L35.5 66.3 L36.5 67.5" stroke="#999" stroke-width="0.6" fill="none"/><path d="M251.8 70 V66.5 M250.8 67.5 L251.8 66.3 L252.8 67.5" stroke="#999" stroke-width="0.6" fill="none"/><path d="M37.6 66.5 V70" stroke="#999" stroke-width="0.7"/><text x="254" y="70.3" font-family="Liberation Sans" font-size="4.5" fill="#999">2</text><path d="M3.8 76.8 H8.2 L10.2 78.8 V84.39999999999999 H3.8 Z" fill="#f4f4f4" stroke="#9a9a9a" stroke-width="0.7" stroke-linejoin="round"/><path d="M5 79.8 H9 M5 81.3 H9 M5 82.8 H9" stroke="#cfcfcf" stroke-width="0.5"/><path d="M3.8 86.8 H8.2 L10.2 88.8 V94.39999999999999 H3.8 Z" fill="#f4f4f4" stroke="#9a9a9a" stroke-width="0.7" stroke-linejoin="round"/><path d="M5 89.8 H9 M5 91.3 H9 M5 92.8 H9" stroke="#cfcfcf" stroke-width="0.5"/></svg>
<svg style="left:0px;top:0px" width="1024" height="554" viewBox="0 0 1024 554"><rect x="2.2" y="375.7" width="8.2" height="6.2" fill="#1a8ce8" stroke="#0b6cc4" stroke-width="0.6"/><g opacity="1"><path d="M39.3 378.2 V376.2 A1.6 1.6 0 0 1 42.5 376.2 V378.2" stroke="#8a8a8a" stroke-width="0.9" fill="none"/><rect x="38" y="378.0" width="5.8" height="4.8" rx="0.6" fill="#f5cf5a" stroke="#d9a83a" stroke-width="0.5"/><rect x="39" y="380.0" width="3.8" height="0.7" fill="#fff3c0"/></g><rect x="49" y="374.6" width="7.6" height="8.3" rx="0.6" fill="#f5d36a" stroke="#d9a93a" stroke-width="0.6"/><circle cx="52" cy="378.4" r="2.2" fill="#c9e6f2" stroke="#6a8aa0" stroke-width="0.6"/><path d="M50.4 380 L48.6 382.2" stroke="#444" stroke-width="0.8"/><path d="M55.5 381 L57.2 383 H53.8 Z" fill="#2a6cc2"/><g opacity="1"><path d="M98.4 374.9 H101 L101.8 375.9 H104.6 V382.6 H98.4 Z" fill="#f3c94e" stroke="#d8a632" stroke-width="0.6"/><rect x="99.6" y="376.5" width="5" height="6.1" fill="#fbe08a"/></g><g opacity="1"><path d="M2.9 388.4 H5.5 L6.3 389.4 H9.299999999999999 V396.1 H2.9 Z" fill="#f3c94e" stroke="#d8a632" stroke-width="0.6"/><rect x="4.1" y="390" width="5.2" height="6.1" fill="#fbe08a"/></g><path d="M32.4 388.4 H36.4 L38.2 390.2 V396.2 H32.4 Z" fill="#fff" stroke="#8a8a8a" stroke-width="0.6" stroke-linejoin="round"/><g><rect x="485.3" y="391.6" width="5.8" height="4.8" rx="0.5" fill="#f5cf5a" stroke="#d9a83a" stroke-width="0.5"/><path d="M488.5 391.6 V389.6 A1.5 1.5 0 0 1 491.5 389.6" stroke="#8a8a8a" stroke-width="0.8" fill="none"/><rect x="491.2" y="387.8" width="2.6" height="2" fill="#fff" stroke="#888" stroke-width="0.5"/></g><path d="M478 400.5 L480.3 402.5 L482.6 400.5 M478 403 L480.3 405 L482.6 403" stroke="#111" stroke-width="0.9" fill="none"/><path d="M488.3 400.5 L492.8 405 M492.8 400.5 L488.3 405" stroke="#111" stroke-width="1.2"/><g opacity="1"><path d="M35.199999999999996 410.4 H37.8 L38.599999999999994 411.4 H41.9 V418.1 H35.199999999999996 Z" fill="#f3c94e" stroke="#d8a632" stroke-width="0.6"/><rect x="36.4" y="412" width="5.5" height="6.1" fill="#fbe08a"/></g><circle cx="40.3" cy="416.4" r="2.9" fill="#26a05c" stroke="#fff" stroke-width="0.5"/><path d="M38.9 416.5 L40 417.5 L41.8 415.4" stroke="#fff" stroke-width="0.9" fill="none"/><path d="M47.6 414.4 H51.4 L49.5 416.5 Z" fill="#111"/><g opacity="0.4"><g opacity="1"><path d="M57.199999999999996 410.4 H59.8 L60.599999999999994 411.4 H63.9 V418.1 H57.199999999999996 Z" fill="#f3c94e" stroke="#d8a632" stroke-width="0.6"/><rect x="58.4" y="412" width="5.5" height="6.1" fill="#fbe08a"/></g><circle cx="62.2" cy="416.4" r="2.8" fill="#e06040" stroke="#fff" stroke-width="0.5"/><path d="M61 415.2 L63.4 417.6 M63.4 415.2 L61 417.6" stroke="#fff" stroke-width="0.8"/></g><g opacity="1"><path d="M71.9 410.4 H74.5 L75.3 411.4 H78.6 V418.1 H71.9 Z" fill="#f3c94e" stroke="#d8a632" stroke-width="0.6"/><rect x="73.1" y="412" width="5.5" height="6.1" fill="#fbe08a"/></g><circle cx="76.7" cy="416.4" r="2.9" fill="#d2401e" stroke="#fff" stroke-width="0.5"/><path d="M75.4 417.6 L78 415.2" stroke="#fff" stroke-width="0.9"/><g opacity="1"><path d="M87.8 414.40000000000003 V412.40000000000003 A1.6 1.6 0 0 1 91.0 412.40000000000003 V414.40000000000003" stroke="#8a8a8a" stroke-width="0.9" fill="none"/><rect x="86.5" y="414.20000000000005" width="5.8" height="4.8" rx="0.6" fill="#f5cf5a" stroke="#d9a83a" stroke-width="0.5"/><rect x="87.5" y="416.20000000000005" width="3.8" height="0.7" fill="#fff3c0"/></g><g opacity="1"><path d="M6.4 422.0 H9 L9.8 423.0 H12.4 V429.6 H6.4 Z" fill="#f3c94e" stroke="#d8a632" stroke-width="0.6"/><rect x="7.6" y="423.6" width="4.8" height="6.0" fill="#fbe08a"/></g><g opacity="0.35"><path d="M6.4 430.59999999999997 H9 L9.8 431.59999999999997 H12.4 V438.2 H6.4 Z" fill="#f3c94e" stroke="#d8a632" stroke-width="0.6"/><rect x="7.6" y="432.2" width="4.8" height="6.0" fill="#fbe08a"/></g><path d="M428.2 414.5 L430.5 416.7 L432.8 414.5" stroke="#444" stroke-width="0.8" fill="none"/><path d="M428.2 426.7 L430.5 428.9 L432.8 426.7" stroke="#444" stroke-width="0.8" fill="none"/><path d="M324.0 481.7 L326.3 483.9 L328.6 481.7" stroke="#444" stroke-width="0.8" fill="none"/><path d="M324.0 507.8 L326.3 510.0 L328.6 507.8" stroke="#444" stroke-width="0.8" fill="none"/><path d="M122.3 533.4 L124.6 535.6 L126.89999999999999 533.4" stroke="#444" stroke-width="0.8" fill="none"/><path d="M324.0 533.4 L326.3 535.6 L328.6 533.4" stroke="#444" stroke-width="0.8" fill="none"/><path d="M409.5 481.7 L411.8 483.9 L414.1 481.7" stroke="#444" stroke-width="0.8" fill="none"/><path d="M409.5 507.8 L411.8 510.0 L414.1 507.8" stroke="#444" stroke-width="0.8" fill="none"/><path d="M409.5 533.4 L411.8 535.6 L414.1 533.4" stroke="#444" stroke-width="0.8" fill="none"/><path d="M303.09999999999997 438.2 L304.79999999999995 440.09999999999997 L307.9 436.0" stroke="#1a1a1a" stroke-width="0.9" fill="none"/><path d="M303.09999999999997 446.65000000000003 L304.79999999999995 448.55 L307.9 444.45000000000005" stroke="#1a1a1a" stroke-width="0.9" fill="none"/><path d="M58.7 493.5 L60.4 495.4 L63.5 491.3" stroke="#1a1a1a" stroke-width="0.9" fill="none"/><path d="M173.7 493.40000000000003 L175.4 495.3 L178.5 491.20000000000005" stroke="#1a1a1a" stroke-width="0.9" fill="none"/><path d="M450.8 420.5 H456.5 L457.8 422.3 H472.8 V440.6 H450.8 Z" fill="#e6b548" stroke="#d4a23a" stroke-width="0.5"/><rect x="450.8" y="423.8" width="22" height="16.8" fill="#fbe09a" stroke="#e0b050" stroke-width="0.5"/><circle cx="466" cy="430.3" r="4.8" fill="#e4e4e4" stroke="#505050" stroke-width="1.1"/><path d="M462.6 434 L457.6 440.4" stroke="#505050" stroke-width="1.5"/><path d="M489.2 414.5 L491.2 412.5 L493.2 414.5" stroke="#333" stroke-width="0.8" fill="none"/><path d="M489.2 548.5 L491.2 550.5 L493.2 548.5" stroke="#333" stroke-width="0.8" fill="none"/></svg>
</body></html>
